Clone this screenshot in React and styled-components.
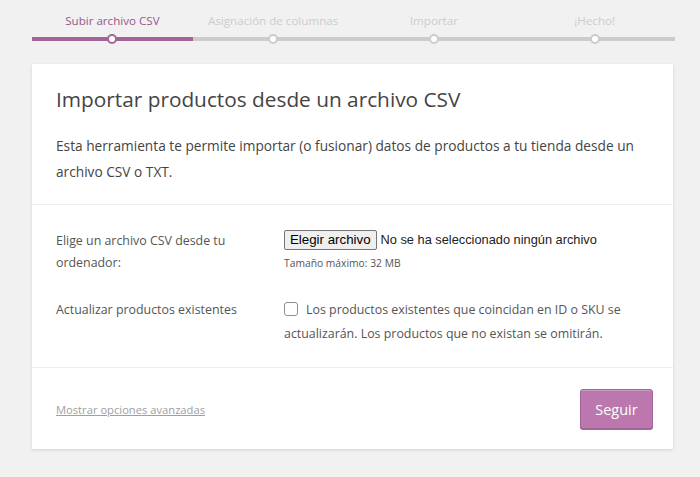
import React from "react";
import styled, { createGlobalStyle } from "styled-components";

const Global = createGlobalStyle`
  html, body { margin: 0; padding: 0; background: #f1f1f1; }
  body { font-family: "Open Sans", "Noto Sans", sans-serif; color: #444; }
`;

const Page = styled.div`
  width: 700px;
  height: 477px;
  padding: 0 25px 0 32px;
  box-sizing: border-box;
  overflow: hidden;
`;

const Steps = styled.ol`
  list-style: none;
  margin: 0;
  padding: 11px 0 0;
  display: grid;
  grid-template-columns: repeat(4, 1fr);
  width: 643px;
`;

const Step = styled.li`
  display: flex;
  flex-direction: column;
  align-items: center;
  font-size: 11.6px;
  line-height: 20px;
  color: ${(p) => (p.$done ? "#96588a" : "#ccc")};
`;

const StepTrack = styled.span`
  position: relative;
  align-self: stretch;
  height: 4px;
  margin-top: 6px;
  background: ${(p) => (p.$done ? "#a46497" : "#ccc")};
`;

const StepDot = styled.span`
  position: absolute;
  left: 50%;
  top: 50%;
  width: 6px;
  height: 6px;
  margin: -5px 0 0 -5px;
  border-radius: 50%;
  background: #fff;
  border: 2px solid ${(p) => (p.$done ? "#a46497" : "#ccc")};
`;

const Card = styled.section`
  margin-top: 23px;
  width: 641px;
  background: #fff;
  box-shadow: 0 1px 3px rgba(0, 0, 0, 0.13);
`;

const Header = styled.header`
  padding: 20px 24px 19px;
  border-bottom: 1px solid #eee;
`;

const Title = styled.h2`
  margin: 0;
  font-size: 20.8px;
  font-weight: 400;
  line-height: 30px;
  color: #444;
`;

const Lead = styled.p`
  margin: 19px 0 0;
  font-size: 13.7px;
  line-height: 26px;
  color: #444;
`;

const Fields = styled.div`
  padding: 25px 24px 21px;
  display: grid;
  grid-template-columns: 228px 1fr;
  row-gap: 25px;
  border-bottom: 1px solid #eee;
`;

const Label = styled.div`
  font-size: 12.4px;
  line-height: 22px;
  color: #555;
  padding-right: 8px;
`;

const NarrowLabel = styled(Label)`
  padding-right: 40px;
`;

const Control = styled.div`
  font-size: 12.4px;
  line-height: 24px;
  color: #555;
  margin-top: -1px;
`;

const FileRow = styled.div`
  display: flex;
  align-items: center;
  gap: 4px;
  height: 20px;
  margin-top: 1px;
  font-family: "Liberation Sans", Arial, sans-serif;
  font-size: 12.8px;
  color: #222;
`;

const FileButton = styled.button`
  font-family: "Liberation Sans", Arial, sans-serif;
  font-size: 13.3px;
  color: #000;
  background: #efefef;
  border: 1px solid #767676;
  border-radius: 2px;
  padding: 1px 5px;
  height: 20px;
  line-height: 16px;
`;

const Hint = styled.div`
  margin-top: 6px;
  font-size: 10.3px;
  line-height: 14px;
  color: #555;
`;

const Check = styled.span`
  display: inline-block;
  width: 12px;
  height: 12px;
  border: 1px solid #8c8f94;
  border-radius: 3px;
  vertical-align: -2px;
  margin-right: 8px;
  background: #fff;
`;

const Footer = styled.footer`
  display: flex;
  align-items: center;
  justify-content: space-between;
  padding: 21px 20px 20px 24px;
`;

const MoreLink = styled.a`
  font-size: 11.2px;
  color: #a0a0a0;
  text-decoration: underline;
`;

const Continue = styled.button`
  font-family: "Open Sans", "Noto Sans", sans-serif;
  font-size: 14.5px;
  color: #fff;
  background: #bb77ae;
  border: 1px solid #a36597;
  border-radius: 3px;
  box-shadow: inset 0 1px 0 rgba(255, 255, 255, 0.25), 0 1px 0 #a36597;
  width: 73px;
  height: 40px;
  padding: 0;
`;

const stepNames = ["Subir archivo CSV", "Asignación de columnas", "Importar", "¡Hecho!"];

export default function App() {
  return (
    <Page>
      <Global />
      <Steps>
        {stepNames.map((s, i) => (
          <Step key={s} $done={i === 0}>
            {s}
            <StepTrack $done={i === 0}>
              <StepDot $done={i === 0} />
            </StepTrack>
          </Step>
        ))}
      </Steps>
      <Card>
        <Header>
          <Title>Importar productos desde un archivo CSV</Title>
          <Lead>
            Esta herramienta te permite importar (o fusionar) datos de productos a tu tienda desde un
            archivo CSV o TXT.
          </Lead>
        </Header>
        <Fields>
          <NarrowLabel>Elige un archivo CSV desde tu ordenador:</NarrowLabel>
          <Control>
            <FileRow>
              <FileButton type="button">Elegir archivo</FileButton>
              No se ha seleccionado ningún archivo
            </FileRow>
            <Hint>Tamaño máximo: 32 MB</Hint>
          </Control>
          <Label>Actualizar productos existentes</Label>
          <Control>
            <Check />
            Los productos existentes que coincidan en ID o SKU se actualizarán. Los productos que no
            existan se omitirán.
          </Control>
        </Fields>
        <Footer>
          <MoreLink href="#">Mostrar opciones avanzadas</MoreLink>
          <Continue type="button">Seguir</Continue>
        </Footer>
      </Card>
    </Page>
  );
}
